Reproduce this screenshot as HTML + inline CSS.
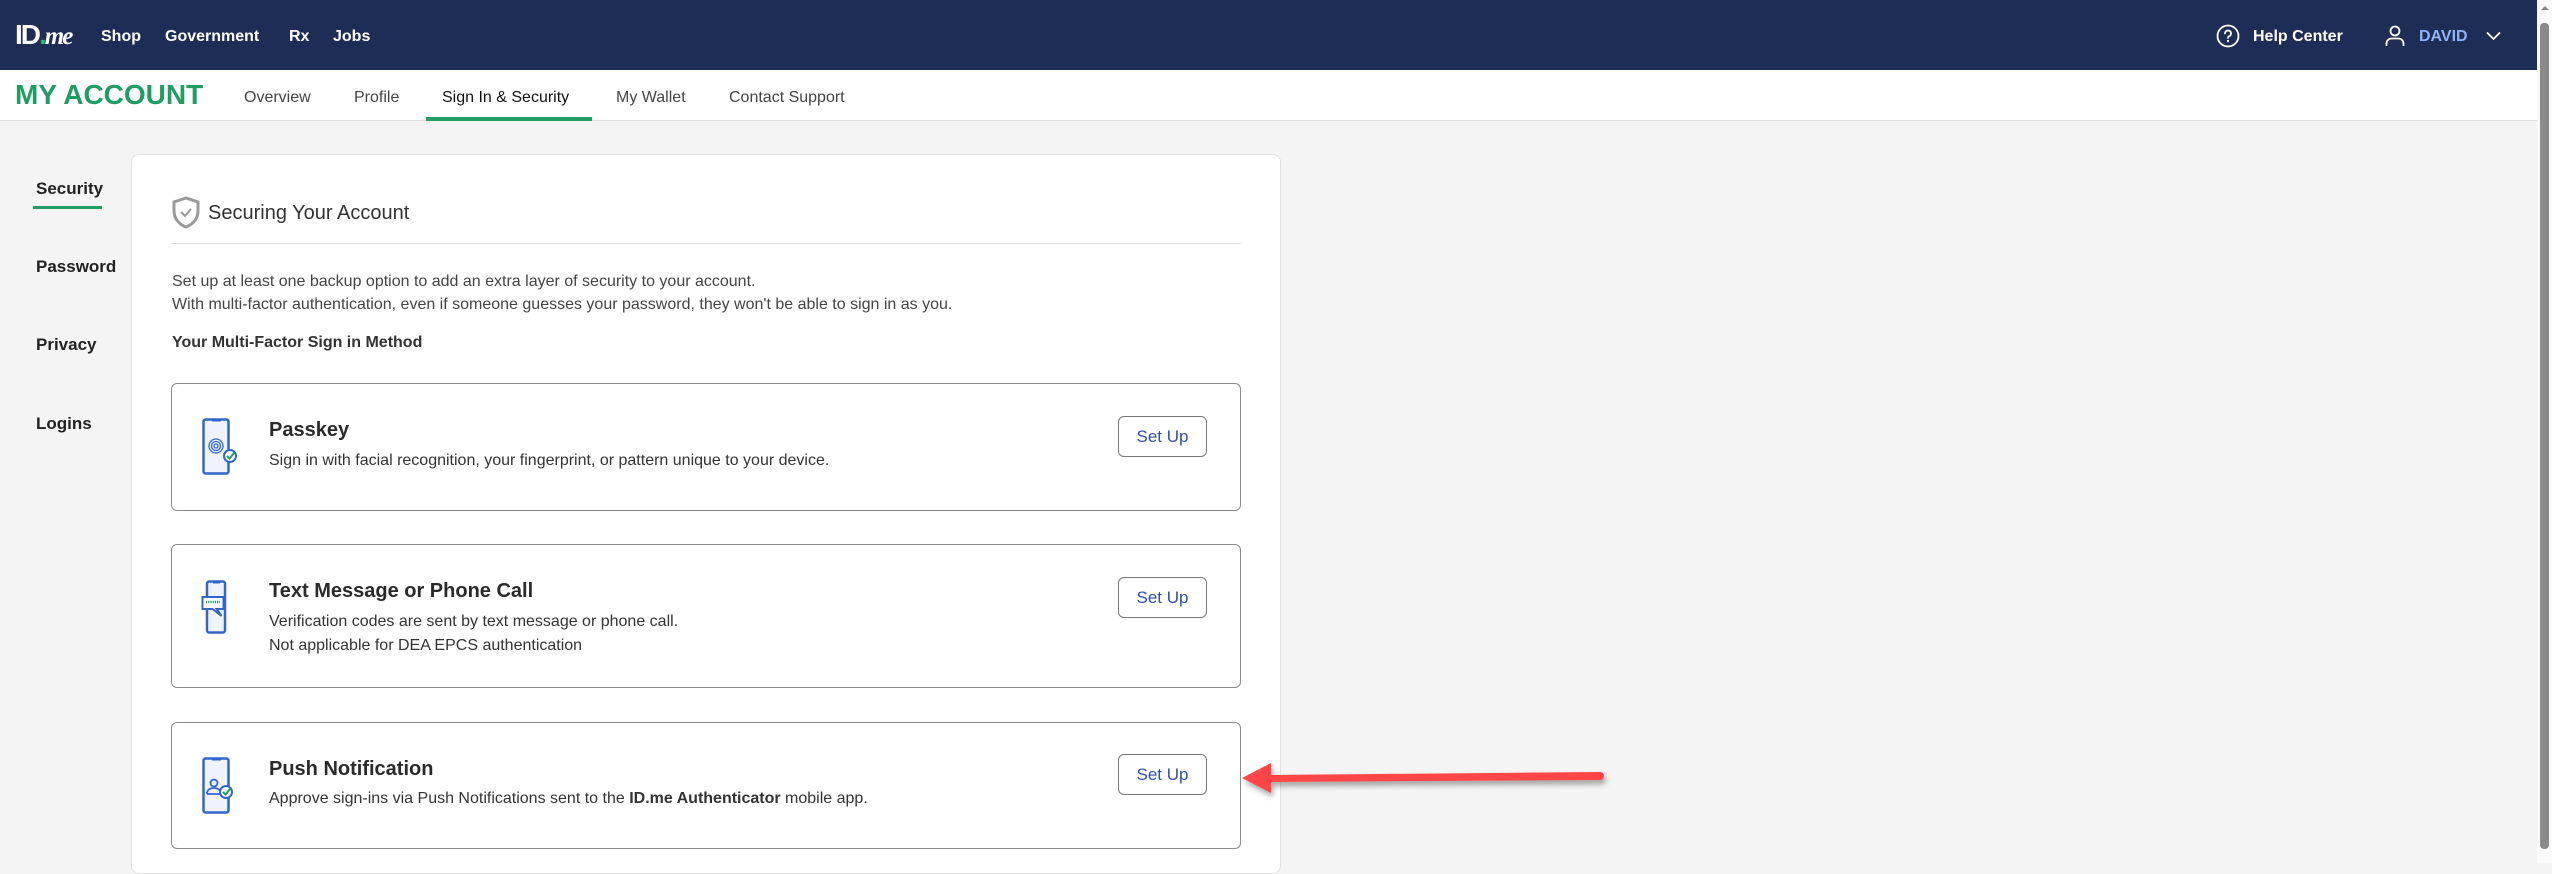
<!DOCTYPE html>
<html><head><meta charset="utf-8">
<style>
*{margin:0;padding:0;box-sizing:border-box}
body{width:2552px;height:863px;overflow:hidden;background:#f4f4f4;font-family:"Liberation Sans",Arial,sans-serif;position:relative;color:#222}
.a{position:absolute;white-space:nowrap}
.hdr{position:absolute;left:0;top:0;width:2537px;height:70px;background:#1e2d55}
.nav{position:absolute;left:0;top:70px;width:2537px;height:51px;background:#fff;border-bottom:1px solid #ddd}
.side{font-size:17px;color:#222;font-weight:bold}
.card{position:absolute;left:131px;top:154px;width:1150px;height:720px;background:#fff;border:1px solid #e2e2e2;border-radius:8px}
.box{position:absolute;left:171px;width:1070px;border:1.5px solid #8a8a8a;border-radius:6px;background:#fff}
.ttl{font-size:20px;font-weight:bold;color:#2a2a2a}
.desc{font-size:16px;color:#333}
.btn{position:absolute;left:1118px;width:89px;height:41px;border:1.5px solid #777;border-radius:6px;color:#2f4fa8;font-size:17px;text-align:center;line-height:40px;background:#fff}
.h{color:#fff;font-weight:bold;font-size:16px;top:28px}
.n{font-size:16px;color:#444;top:89px}
</style></head><body>
<div class="hdr"></div>
<div class="a" style="left:15px;top:19px;color:#fff;font-weight:bold;font-size:28px;letter-spacing:-2px">ID<span style="color:#2bb673">.</span><i style="font-family:'Liberation Serif',serif;font-size:25px">me</i></div>
<div class="a h" style="left:101px">Shop</div>
<div class="a h" style="left:165px">Government</div>
<div class="a h" style="left:289px">Rx</div>
<div class="a h" style="left:333px">Jobs</div>
<svg class="a" style="left:2216px;top:24px" width="24" height="24" viewBox="0 0 24 24"><circle cx="12" cy="12" r="10.5" fill="none" stroke="#fff" stroke-width="1.8"/><path d="M9 9.5a3 3 0 1 1 4 2.8c-.8.4-1 .9-1 1.7" fill="none" stroke="#fff" stroke-width="1.8" stroke-linecap="round"/><circle cx="12" cy="17" r="1.1" fill="#fff"/></svg>
<div class="a h" style="left:2253px">Help Center</div>
<svg class="a" style="left:2385px;top:25px" width="20" height="22" viewBox="0 0 20 22"><circle cx="10" cy="6" r="4.5" fill="none" stroke="#fff" stroke-width="1.8"/><path d="M1.5 21v-2.5a5 5 0 0 1 5-5h7a5 5 0 0 1 5 5V21" fill="none" stroke="#fff" stroke-width="1.8"/></svg>
<div class="a h" style="left:2419px;color:#8fb3f5">DAVID</div>
<svg class="a" style="left:2486px;top:31px" width="15" height="10" viewBox="0 0 15 10"><path d="M1 1.5l6.5 6.5 6.5-6.5" fill="none" stroke="#fff" stroke-width="1.8"/></svg>

<div class="nav"></div>
<div class="a" style="left:15px;top:79px;color:#1f9e64;font-weight:900;font-size:28px;letter-spacing:0px">MY ACCOUNT</div>
<div class="a n" style="left:244px">Overview</div>
<div class="a n" style="left:354px">Profile</div>
<div class="a n" style="left:442px;color:#111">Sign In &amp; Security</div>
<div class="a" style="left:426px;top:117px;width:166px;height:4px;background:#1f9e64"></div>
<div class="a n" style="left:616px">My Wallet</div>
<div class="a n" style="left:729px">Contact Support</div>

<div class="a side" style="left:36px;top:179px">Security</div>
<div class="a" style="left:33px;top:206px;width:69px;height:3px;background:#1f9e64"></div>
<div class="a side" style="left:36px;top:257px">Password</div>
<div class="a side" style="left:36px;top:335px">Privacy</div>
<div class="a side" style="left:36px;top:414px">Logins</div>

<div class="card"></div>
<svg class="a" style="left:171px;top:196px" width="30" height="33" viewBox="0 0 30 33"><path d="M15 2L3 6v9c0 8 5.5 13.5 12 16 6.5-2.5 12-8 12-16V6z" fill="none" stroke="#999" stroke-width="3"/><path d="M10 16l4 4 6-7" fill="none" stroke="#999" stroke-width="2"/></svg>
<div class="a" style="left:208px;top:202px;font-size:20px;color:#333">Securing Your Account</div>
<div class="a" style="left:171px;top:243px;width:1070px;height:1px;background:#ddd"></div>
<div class="a desc" style="left:172px;top:273px;color:#444">Set up at least one backup option to add an extra layer of security to your account.</div>
<div class="a desc" style="left:172px;top:296px;color:#444">With multi-factor authentication, even if someone guesses your password, they won't be able to sign in as you.</div>
<div class="a" style="left:172px;top:334px;font-size:16px;font-weight:bold;color:#333">Your Multi-Factor Sign in Method</div>

<div class="box" style="top:383px;height:128px"></div>
<svg class="a" style="left:202px;top:418px" width="36" height="58" viewBox="0 0 36 58"><rect x="1.5" y="1.5" width="25" height="54" rx="2" fill="#eef3fc" stroke="#3366cc" stroke-width="2.5"/><path d="M10 2h9" stroke="#3366cc" stroke-width="3"/><g fill="none" stroke="#3366cc" stroke-width="1.3"><circle cx="14" cy="28" r="2"/><circle cx="14" cy="28" r="4.5"/><circle cx="14" cy="28" r="7"/></g><circle cx="28" cy="38" r="6" fill="#fff" stroke="#3366cc" stroke-width="2"/><path d="M25 38l2.5 2.5 5-6" fill="none" stroke="#1f9e64" stroke-width="2"/></svg>
<div class="a ttl" style="left:269px;top:419px">Passkey</div>
<div class="a desc" style="left:269px;top:452px">Sign in with facial recognition, your fingerprint, or pattern unique to your device.</div>
<div class="btn" style="top:416px">Set Up</div>

<div class="box" style="top:544px;height:144px"></div>
<svg class="a" style="left:201px;top:580px" width="36" height="55" viewBox="0 0 36 55"><rect x="6" y="1.5" width="18" height="51" rx="2" fill="#eef3fc" stroke="#3366cc" stroke-width="2.5"/><path d="M12 2h7" stroke="#3366cc" stroke-width="3"/><path d="M1.5 17h21v12h-7l5 7-9-7h-10z" fill="#fff" stroke="#3366cc" stroke-width="2"/><path d="M5 22h14" stroke="#1f9e64" stroke-width="2.5" stroke-dasharray="1.2 1"/></svg>
<div class="a ttl" style="left:269px;top:580px">Text Message or Phone Call</div>
<div class="a desc" style="left:269px;top:613px">Verification codes are sent by text message or phone call.</div>
<div class="a desc" style="left:269px;top:637px">Not applicable for DEA EPCS authentication</div>
<div class="btn" style="top:577px">Set Up</div>

<div class="box" style="top:722px;height:127px"></div>
<svg class="a" style="left:202px;top:757px" width="36" height="58" viewBox="0 0 36 58"><rect x="1.5" y="1.5" width="25" height="54" rx="2" fill="#eef3fc" stroke="#3366cc" stroke-width="2.5"/><path d="M10 2h9" stroke="#3366cc" stroke-width="3"/><circle cx="12" cy="26" r="3.5" fill="none" stroke="#3366cc" stroke-width="1.8"/><path d="M5 37c0-4 3-6 7-6s6 2 7 4M5 37h13" fill="none" stroke="#3366cc" stroke-width="1.8"/><circle cx="24" cy="35" r="6" fill="#fff" stroke="#3366cc" stroke-width="2"/><path d="M21 35l2.5 2.5 5-6" fill="none" stroke="#1f9e64" stroke-width="2"/></svg>
<div class="a ttl" style="left:269px;top:758px">Push Notification</div>
<div class="a desc" style="left:269px;top:790px">Approve sign-ins via Push Notifications sent to the <b>ID.me Authenticator</b> mobile app.</div>
<div class="btn" style="top:754px">Set Up</div>

<svg class="a" style="left:1236px;top:755px" width="380" height="50" viewBox="0 0 380 50"><defs><filter id="s" x="-10%" y="-50%" width="120%" height="200%"><feDropShadow dx="2" dy="4" stdDeviation="3" flood-opacity="0.35"/></filter></defs><g filter="url(#s)" fill="#ff4444"><path d="M6 23L35 8v30z"/><path d="M33 20L364 17a4 4 0 0 1 0 8L33 27z"/></g></svg>

<div class="a" style="left:2537px;top:0;width:15px;height:863px;background:#fafafa"></div>
<div class="a" style="left:2541px;top:6px;width:0;height:0;border-left:4px solid transparent;border-right:4px solid transparent;border-bottom:4px solid #888"></div>
<div class="a" style="left:2540px;top:23px;width:9px;height:826px;background:#8a8a8a;border-radius:4px"></div>
</body></html>
